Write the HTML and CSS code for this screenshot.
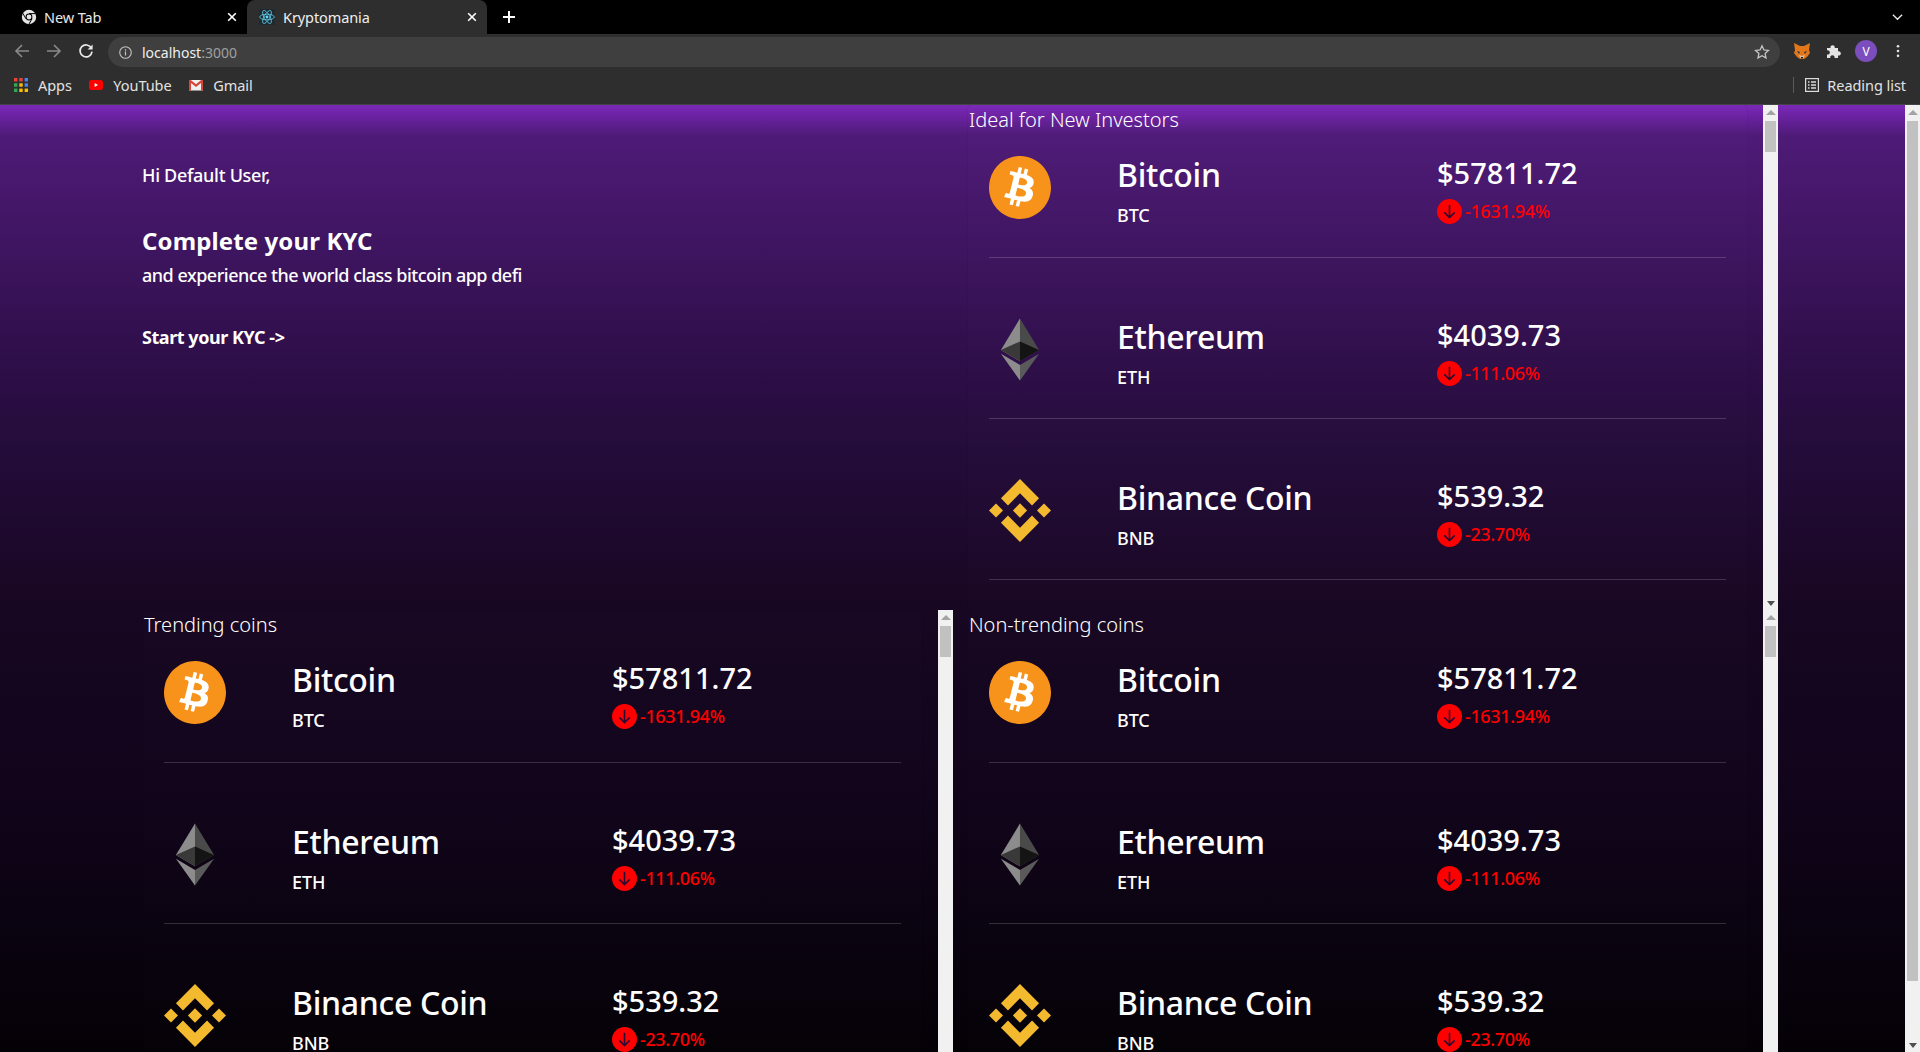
FILE: index.html
```html
<!DOCTYPE html>
<html lang="en">
<head>
<meta charset="utf-8">
<title>Kryptomania</title>
<link rel="stylesheet" href="styles.css">
</head>
<body>
<svg class="defs" width="0" height="0" aria-hidden="true">
  <defs>
    <symbol id="btc" viewBox="0 0 64 64" preserveAspectRatio="none">
      <path fill="#f7931a" d="M63.04 39.741c-4.274 17.143-21.638 27.575-38.783 23.301C7.12 58.768-3.313 41.404.962 24.262 5.234 7.117 22.597-3.317 39.737.957c17.144 4.274 27.576 21.64 23.302 38.784z"/>
      <path fill="#fff" d="M46.11 27.441c.636-4.258-2.606-6.547-7.039-8.074l1.438-5.768-3.512-.875-1.4 5.616c-.922-.23-1.87-.447-2.812-.662l1.41-5.653-3.509-.875-1.439 5.766c-.764-.174-1.514-.346-2.242-.527l.004-.018-4.842-1.209-.934 3.75s2.605.597 2.55.634c1.422.355 1.68 1.296 1.636 2.042l-1.638 6.571c.098.025.225.061.365.117l-.37-.092-2.297 9.205c-.174.432-.615 1.08-1.609.834.035.051-2.552-.637-2.552-.637l-1.743 4.02 4.57 1.139c.85.213 1.683.436 2.502.646l-1.453 5.835 3.507.875 1.44-5.772c.957.26 1.887.5 2.797.726L27.504 50.8l3.511.875 1.453-5.823c5.987 1.133 10.49.676 12.383-4.738 1.527-4.36-.075-6.875-3.225-8.516 2.294-.531 4.022-2.04 4.483-5.157zM38.087 38.69c-1.086 4.36-8.426 2.004-10.807 1.412l1.928-7.729c2.38.594 10.011 1.77 8.88 6.317zm1.085-11.312c-.99 3.966-7.1 1.951-9.083 1.457l1.748-7.01c1.983.494 8.367 1.416 7.335 5.553z"/>
    </symbol>
    <symbol id="eth" viewBox="-80 0 416 417">
      <polygon fill="#4a4a4a" points="127.961,0 125.166,9.5 125.166,285.168 127.961,287.958 255.923,212.32"/>
      <polygon fill="#8c8c8c" points="127.962,0 0,212.32 127.962,287.959 127.962,154.158"/>
      <polygon fill="#5a5a5a" points="127.961,312.187 126.386,314.107 126.386,412.306 127.961,416.905 256,236.587"/>
      <polygon fill="#8c8c8c" points="127.962,416.905 127.962,312.187 0,236.587"/>
      <polygon fill="#141414" points="127.961,287.958 255.921,212.321 127.961,154.159"/>
      <polygon fill="#393939" points="0,212.321 127.96,287.958 127.96,154.159"/>
    </symbol>
    <symbol id="bnb" viewBox="0 0 126.61 126.61" preserveAspectRatio="none">
      <g fill="#f3ba2f">
        <path d="M38.73 53.2 63.3 28.63 87.89 53.22l14.3-14.3L63.3 0 24.43 38.9z"/>
        <path d="M0 63.31 14.3 49l14.3 14.3-14.3 14.3z"/>
        <path d="M38.73 73.41 63.3 97.98 87.89 73.4l14.31 14.29-38.9 38.92-38.87-38.9z"/>
        <path d="M98 63.31 112.31 49l14.3 14.3-14.3 14.3z"/>
        <path d="M77.83 63.3 63.3 48.78 48.78 63.3 63.3 77.83z"/>
      </g>
    </symbol>
    <symbol id="down" viewBox="0 0 24 24">
      <circle cx="12" cy="12" r="12" fill="#ff0000"/>
      <path d="M12 5.5v12M7 12.8l5 5 5-5" fill="none" stroke="#2a0a33" stroke-width="1.5"/>
    </symbol>
    <symbol id="close" viewBox="0 0 10 10">
      <path d="M1.2 1.2l7.6 7.6M8.8 1.2l-7.6 7.6" stroke="#fff" stroke-width="1.6" fill="none"/>
    </symbol>
  </defs>
</svg>

<header class="browser">
  <div class="tabstrip">
    <div class="tab">
      <svg class="favicon" viewBox="0 0 16 16"><circle cx="8" cy="8" r="7.2" fill="#e4e4e4"/><circle cx="8" cy="8" r="3.4" fill="#000"/><circle cx="8" cy="8" r="2.4" fill="#e4e4e4"/><path d="M8 4.6h6.4M5 9.8 1.9 4.4M11 9.8l-3.2 5.6" stroke="#000" stroke-width="1"/></svg>
      <span class="tab-title tab-title-first">New Tab</span>
      <svg class="tab-close"><use href="#close"/></svg>
    </div>
    <div class="tab tab-active">
      <span class="react-box"><svg class="favicon" viewBox="-12 -12 24 24"><circle r="2.2" fill="#61dafb"/><g fill="none" stroke="#61dafb" stroke-width="1.1"><ellipse rx="11" ry="4.2"/><ellipse rx="11" ry="4.2" transform="rotate(60)"/><ellipse rx="11" ry="4.2" transform="rotate(120)"/></g></svg></span>
      <span class="tab-title">Kryptomania</span>
      <svg class="tab-close"><use href="#close"/></svg>
    </div>
    <svg class="newtab" viewBox="0 0 12 12"><path d="M6 0v12M0 6h12" stroke="#fff" stroke-width="2"/></svg>
    <svg class="tabsearch" viewBox="0 0 12 8"><path d="M1 1.5l5 5 5-5" stroke="#e8e8e8" stroke-width="1.5" fill="none"/></svg>
  </div>

  <div class="toolbar">
    <svg class="tool" viewBox="0 0 16 16"><path d="M15 8H2M8 2 2 8l6 6" fill="none" stroke="#8a8a8a" stroke-width="1.6"/></svg>
    <svg class="tool" viewBox="0 0 16 16"><path d="M1 8h13M8 2l6 6-6 6" fill="none" stroke="#8a8a8a" stroke-width="1.6"/></svg>
    <svg class="tool" viewBox="0 0 16 16"><path d="M13.4 5.2A6 6 0 1 0 14 8.6" fill="none" stroke="#e8e8e8" stroke-width="1.7"/><path d="M14.6 1.6v5h-5z" fill="#e8e8e8"/></svg>
    <div class="omnibox">
      <svg class="info" viewBox="0 0 14 14"><circle cx="7" cy="7" r="6.2" fill="none" stroke="#c4c4c4" stroke-width="1.2"/><path d="M7 6v4.2M7 3.6v1.4" stroke="#c4c4c4" stroke-width="1.3"/></svg>
      <span class="url">localhost<span class="url-port">:3000</span></span>
      <svg class="star" viewBox="0 0 16 16"><path d="M8 1.8l1.9 4.1 4.5.5-3.3 3 .9 4.5L8 11.7l-4 2.2.9-4.5-3.3-3 4.5-.5z" fill="none" stroke="#c4c4c4" stroke-width="1.3"/></svg>
    </div>
    <svg class="fox" viewBox="0 0 18 16"><path d="M1 0l6 3h4l6-3-1 7 1 3-3 4-3 2H7l-3-2-3-4 1-3z" fill="#e2761b"/><path d="M4 8l3 1-1 2zM14 8l-3 1 1 2z" fill="#233447"/><path d="M6 12l3 1 3-1-1.500 3h-3z" fill="#d7c1b3"/><path d="M8 14h2v1.300H8z" fill="#1a1a1a"/></svg>
    <svg class="puzzle" viewBox="0 0 16 16"><path d="M1 5h3.500a2.200 2.200 0 1 1 4.200 0H12v3.300a2.200 2.200 0 1 1 0 4.200V15H8.500a2.200 2.200 0 1 0-4.200 0H1v-3.500a2.200 2.200 0 1 0 0-4.200z" fill="#e4e4e4"/></svg>
    <span class="avatar">V</span>
    <svg class="kebab" viewBox="0 0 4 16"><g fill="#e4e4e4"><circle cx="2" cy="2.500" r="1.500"/><circle cx="2" cy="8" r="1.500"/><circle cx="2" cy="13.500" r="1.500"/></g></svg>
  </div>

  <nav class="bookmarks">
    <span class="bookmark">
      <svg class="bm-icon" viewBox="0 0 14 14"><g><rect width="3.400" height="3.400" fill="#ea4335"/><rect x="5.300" width="3.400" height="3.400" fill="#ea4335"/><rect x="10.600" width="3.400" height="3.400" fill="#4285f4"/><rect y="5.300" width="3.400" height="3.400" fill="#34a853"/><rect x="5.300" y="5.300" width="3.400" height="3.400" fill="#fbbc05"/><rect x="10.600" y="5.300" width="3.400" height="3.400" fill="#4285f4"/><rect y="10.600" width="3.400" height="3.400" fill="#34a853"/><rect x="5.300" y="10.600" width="3.400" height="3.400" fill="#fbbc05"/><rect x="10.600" y="10.600" width="3.400" height="3.400" fill="#fbbc05"/></g></svg>
      Apps
    </span>
    <span class="bookmark">
      <svg class="bm-icon" viewBox="0 0 14 14"><rect y="2" width="14" height="10" rx="2.500" fill="#f00"/><path d="M5.600 5v4l3.400-2z" fill="#fff"/></svg>
      YouTube
    </span>
    <span class="bookmark">
      <svg class="bm-icon" viewBox="0 0 14 14"><rect y="2" width="14" height="10.500" fill="#f1f1f1"/><path d="M0 2h1.800L7 6.200 12.200 2H14v10.500h-2V5L7 9 2 5v7.500H0z" fill="#d44638"/></svg>
      Gmail
    </span>
    <span class="reading">
      <svg class="bm-icon" viewBox="0 0 14 14"><rect x=".6" y=".6" width="12.800" height="12.800" fill="none" stroke="#dcdcdc" stroke-width="1.200"/><path d="M3 4h1.500M3 7h1.500M3 10h1.500M6 4h5M6 7h5M6 10h5" stroke="#dcdcdc" stroke-width="1.300"/></svg>
      Reading list
    </span>
  </nav>
</header>

<main class="page">
  <div class="content">
    <section class="hero">
      <p class="hi">Hi Default User,</p>
      <h1 class="kyc-title">Complete your KYC</h1>
      <p class="kyc-sub">and experience the world class bitcoin app defi</p>
      <p class="kyc-link">Start your KYC -&gt;</p>
    </section>

    <section class="panel">
      <div class="card">
        <h2 class="card-title">Ideal for New Investors</h2>
        <article class="coin">
          <svg class="coin-logo"><use href="#btc"/></svg>
          <div class="coin-name"><h3>Bitcoin</h3><p>BTC</p></div>
          <div class="coin-price"><strong>$57811.72</strong><span class="change"><svg><use href="#down"/></svg>-1631.94%</span></div>
        </article>
        <article class="coin">
          <svg class="coin-logo"><use href="#eth"/></svg>
          <div class="coin-name"><h3>Ethereum</h3><p>ETH</p></div>
          <div class="coin-price"><strong>$4039.73</strong><span class="change"><svg><use href="#down"/></svg>-111.06%</span></div>
        </article>
        <article class="coin">
          <svg class="coin-logo"><use href="#bnb"/></svg>
          <div class="coin-name"><h3>Binance Coin</h3><p>BNB</p></div>
          <div class="coin-price"><strong>$539.32</strong><span class="change"><svg><use href="#down"/></svg>-23.70%</span></div>
        </article>
      </div>
      <div class="scrollbar"><i class="arrow-up"></i><b class="thumb"></b><i class="spacer"></i><i class="arrow-down"></i></div>
    </section>

    <section class="panel panel-left">
      <div class="card">
        <h2 class="card-title">Trending coins</h2>
        <article class="coin">
          <svg class="coin-logo"><use href="#btc"/></svg>
          <div class="coin-name"><h3>Bitcoin</h3><p>BTC</p></div>
          <div class="coin-price"><strong>$57811.72</strong><span class="change"><svg><use href="#down"/></svg>-1631.94%</span></div>
        </article>
        <article class="coin">
          <svg class="coin-logo"><use href="#eth"/></svg>
          <div class="coin-name"><h3>Ethereum</h3><p>ETH</p></div>
          <div class="coin-price"><strong>$4039.73</strong><span class="change"><svg><use href="#down"/></svg>-111.06%</span></div>
        </article>
        <article class="coin">
          <svg class="coin-logo"><use href="#bnb"/></svg>
          <div class="coin-name"><h3>Binance Coin</h3><p>BNB</p></div>
          <div class="coin-price"><strong>$539.32</strong><span class="change"><svg><use href="#down"/></svg>-23.70%</span></div>
        </article>
      </div>
      <div class="scrollbar"><i class="arrow-up"></i><b class="thumb"></b></div>
    </section>

    <section class="panel">
      <div class="card">
        <h2 class="card-title">Non-trending coins</h2>
        <article class="coin">
          <svg class="coin-logo"><use href="#btc"/></svg>
          <div class="coin-name"><h3>Bitcoin</h3><p>BTC</p></div>
          <div class="coin-price"><strong>$57811.72</strong><span class="change"><svg><use href="#down"/></svg>-1631.94%</span></div>
        </article>
        <article class="coin">
          <svg class="coin-logo"><use href="#eth"/></svg>
          <div class="coin-name"><h3>Ethereum</h3><p>ETH</p></div>
          <div class="coin-price"><strong>$4039.73</strong><span class="change"><svg><use href="#down"/></svg>-111.06%</span></div>
        </article>
        <article class="coin">
          <svg class="coin-logo"><use href="#bnb"/></svg>
          <div class="coin-name"><h3>Binance Coin</h3><p>BNB</p></div>
          <div class="coin-price"><strong>$539.32</strong><span class="change"><svg><use href="#down"/></svg>-23.70%</span></div>
        </article>
      </div>
      <div class="scrollbar"><i class="arrow-up"></i><b class="thumb"></b></div>
    </section>
  </div>
  <div class="scrollbar page-scrollbar"><i class="arrow-up"></i><b class="thumb page-thumb"></b><i class="spacer"></i><i class="arrow-down"></i></div>
</main>
</body>
</html>
```
FILE: styles.css
```css
* { box-sizing: border-box; }
html, body { margin: 0; height: 100%; overflow: hidden; }
body {
  display: flex;
  flex-direction: column;
  height: 1052px;
  background: #000;
  color: #fff;
  font-family: "Noto Sans", "DejaVu Sans", sans-serif;
}
.defs { position: absolute; }

/* Browser chrome */
.browser { flex: 0 0 105px; display: flex; flex-direction: column; background: #2e2e2e; border-bottom: 1px solid #444; }
.tabstrip { flex: 0 0 34px; display: flex; align-items: center; background: #000; padding-left: 7px; }
.tab { width: 240px; height: 34px; display: flex; align-items: center; padding: 0 10px 1px 14px; font-size: 14.5px; letter-spacing: -.1px; color: #e8e8e8; }
.tab-active { background: #2e2e2e; border-radius: 8px 8px 0 0; padding-left: 12px; color: #eee; }
.favicon { width: 16px; height: 16px; flex: none; }
.react-box { width: 16px; height: 16px; background: #1f2a30; display: flex; }
.tab-title { flex: 1; margin-left: 8px; }
.tab-title-first { margin-left: 7px; }
.tab-close { width: 10px; height: 10px; flex: none; }
.newtab { width: 12px; height: 12px; margin-left: 16px; }
.tabsearch { width: 11px; height: 8px; margin-left: auto; margin-right: 17px; }

.toolbar { flex: 0 0 37px; display: flex; align-items: center; padding: 0 14px 3px 14px; }
.tool { width: 16px; height: 16px; margin-right: 16px; }
.omnibox { width: 1672px; flex: none; height: 30px; margin-left: -2px; margin-top: 2px; background: #3f3f3f; border-radius: 15px; display: flex; align-items: center; padding: 0 10px 0 11px; font-size: 14px; }
.info { width: 13px; height: 13px; }
.url { margin-left: 10px; color: #eee; }
.url-port { color: #a0a0a0; }
.star { width: 16px; height: 16px; margin-left: auto; }
.fox { width: 18px; height: 16px; margin-left: 13px; }
.puzzle { width: 16px; height: 16px; margin-left: 15px; }
.avatar { width: 22px; height: 22px; margin-left: 13px; border-radius: 50%; background: #7c4dbd; font-size: 12px; display: flex; align-items: center; justify-content: center; }
.kebab { width: 4px; height: 14px; margin-left: 19px; }

.bookmarks { flex: 1; display: flex; align-items: center; padding: 0 14px 5px; font-size: 14.5px; letter-spacing: -.05px; color: #e2e2e2; }
.bookmark { display: flex; align-items: center; gap: 10px; margin-right: 17.5px; }
.bm-icon { width: 14px; height: 14px; flex: none; }
.reading { margin-left: auto; display: flex; align-items: center; gap: 8px; border-left: 1px solid #5a5a5a; padding-left: 11px; height: 16px; }

/* Page */
.page {
  flex: 1;
  min-height: 0;
  display: flex;
  justify-content: space-between;
  background: linear-gradient(180deg, #7b28b8 0, #6a22a0 12px, #4f1b78 30px, #4c1a74 45px, #2d0e47 265px, #240c3a 345px, #180722 500px, #10041a 700px, #040106 947px);
}
.content { width: 1778px; display: grid; grid-template-columns: 953px 825px; grid-template-rows: 505px 442px; }

.hero { padding: 57px 0 0 142px; font-size: 18px; font-weight: 500; letter-spacing: -.45px; }
.hero p, .hero h1 { margin: 0; }
.hi { line-height: 26px; letter-spacing: -.3px; }
.kyc-title { font-size: 24px; font-weight: 700; line-height: 32px; letter-spacing: .12px; margin-top: 37px !important; }
.kyc-sub { line-height: 26px; letter-spacing: -.5px; margin-top: 5px !important; }
.kyc-link { font-weight: 700; line-height: 26px; margin-top: 36px !important; }

.panel { display: flex; padding-left: 15px; overflow: hidden; }
.panel-left { padding-left: 143px; }
.card { width: 779px; flex: none; margin-right: 16px; align-self: flex-start; border-radius: 4px; background: rgba(255,255,255,.006); box-shadow: 0 0 1px rgba(0,0,0,.35); }
.card-title { margin: 0; padding-left: 1px; font-size: 20px; font-weight: 300; line-height: 30px; height: 30px; color: #fff; }

.coin { display: flex; height: 123px; margin: 0 21px 38px; padding: 21px 0 38px; border-bottom: 1px solid rgba(255,255,255,.17); }
.coin + .coin { padding-top: 22px; }
.coin-logo { width: 62px; height: 63px; flex: none; margin-right: 66px; }
.coin-name { width: 320px; flex: none; margin-top: -3px; }
.coin-name h3 { margin: 0; font-size: 32px; font-weight: 500; line-height: 44px; letter-spacing: -.3px; }
.coin-name p { margin: 6px 0 0; font-size: 18px; font-weight: 500; line-height: 24px; letter-spacing: -.1px; }
.coin-price { display: flex; flex-direction: column; margin-top: -3px; }
.coin-price strong { font-size: 29px; font-weight: 500; line-height: 40px; }
.change { display: flex; align-items: center; gap: 3px; color: #f00; font-size: 18px; font-weight: 500; line-height: 25px; letter-spacing: -.35px; margin-top: 6px; }
.change svg { width: 25px; height: 25px; flex: none; }

/* Fake scrollbars */
.scrollbar { width: 15px; flex: none; background: #f1f1f1; display: flex; flex-direction: column; align-items: center; padding: 5px 2px 0; }
.arrow-up { width: 0; height: 0; border: 4px solid transparent; border-top: 0; border-bottom: 5px solid #a3a3a3; border-left-width: 5px; border-right-width: 5px; margin-bottom: 6px; }
.arrow-down { width: 0; height: 0; border: 4px solid transparent; border-bottom: 0; border-top: 5px solid #505050; margin: 0 0 4px; }
.thumb { width: 11px; height: 31px; background: #c1c1c1; flex: none; }
.spacer { flex: 1; }
.page-thumb { height: 860px; }
```
